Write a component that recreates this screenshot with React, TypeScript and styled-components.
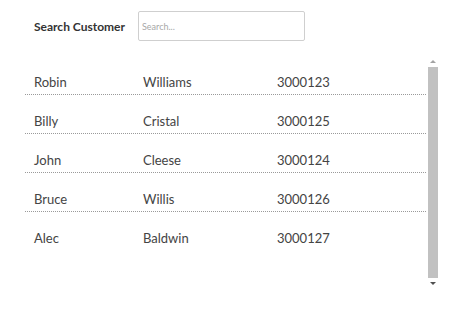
import React from 'react';
import styled, { createGlobalStyle } from 'styled-components';

interface Customer {
  first: string;
  last: string;
  id: string;
}

const customers: Customer[] = [
  { first: 'Robin', last: 'Williams', id: '3000123' },
  { first: 'Billy', last: 'Cristal', id: '3000125' },
  { first: 'John', last: 'Cleese', id: '3000124' },
  { first: 'Bruce', last: 'Willis', id: '3000126' },
  { first: 'Alec', last: 'Baldwin', id: '3000127' },
];

const GlobalStyle = createGlobalStyle`
  body {
    margin: 0;
    background: #fff;
    font-family: Lato, "Open Sans", sans-serif;
    color: #444;
  }
`;

const Page = styled.div`
  width: 474px;
  height: 313px;
  padding: 11px 0 0 25px;
  box-sizing: border-box;
`;

const SearchRow = styled.div`
  display: flex;
  align-items: center;
  gap: 13px;
  padding-left: 9px;
`;

const Label = styled.label`
  font-size: 12px;
  font-weight: 700;
  color: #333;
`;

const SearchInput = styled.input`
  width: 167px;
  height: 30px;
  box-sizing: border-box;
  border: 1px solid #cfcfcf;
  border-radius: 2px;
  padding: 0 3px;
  font-family: Lato, sans-serif;
  font-size: 9px;
  outline: none;

  &::placeholder {
    color: #a8a8a8;
  }
`;

const ListArea = styled.div`
  display: flex;
  margin-top: 15px;
  height: 233px;
`;

const List = styled.div`
  width: 401px;
`;

const Row = styled.div<{ $last?: boolean }>`
  display: grid;
  grid-template-columns: 109px 134px 1fr;
  padding: 18px 0 4px 9px;
  line-height: 16px;
  font-size: 13px;
  border-bottom: 1px ${({ $last }) => ($last ? 'solid transparent' : 'dotted #9a9a9a')};
`;

const Scrollbar = styled.div`
  width: 11px;
  display: flex;
  flex-direction: column;
  align-items: center;
  margin-left: 1px;
`;

const Arrow = styled.div<{ $down?: boolean }>`
  height: 11px;
  display: flex;
  align-items: center;
  justify-content: center;
  &::after {
    content: '';
    border-left: 3px solid transparent;
    border-right: 3px solid transparent;
    ${({ $down }) =>
      $down ? 'border-top: 3px solid #505050;' : 'border-bottom: 3px solid #a3a3a3;'}
  }
`;

const Thumb = styled.div`
  flex: 1;
  width: 10px;
  background: #c1c1c1;
`;

export default function App() {
  return (
    <>
      <GlobalStyle />
      <Page>
        <SearchRow>
          <Label>Search Customer</Label>
          <SearchInput placeholder="Search..." />
        </SearchRow>
        <ListArea>
          <List>
            {customers.map((c, i) => (
              <Row key={c.id} $last={i === customers.length - 1}>
                <span>{c.first}</span>
                <span>{c.last}</span>
                <span>{c.id}</span>
              </Row>
            ))}
          </List>
          <Scrollbar>
            <Arrow />
            <Thumb />
            <Arrow $down />
          </Scrollbar>
        </ListArea>
      </Page>
    </>
  );
}
